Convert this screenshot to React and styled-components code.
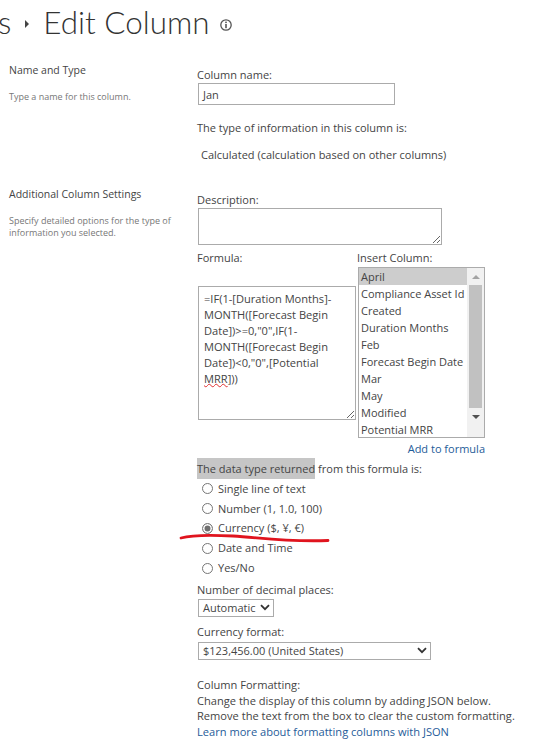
import React from 'react';
import styled, { createGlobalStyle } from 'styled-components';

const GlobalStyle = createGlobalStyle`
  html, body {
    margin: 0;
    padding: 0;
    background: #fff;
    overflow: hidden;
  }
  body {
    font: 400 12px/16px 'Open Sans', 'Noto Sans', sans-serif;
    color: #444;
  }
`;

const Page = styled.div`
  position: relative;
  width: 555px;
  height: 741px;
  overflow: hidden;
`;

const Header = styled.h1`
  display: flex;
  align-items: center;
  height: 44px;
  margin: 0 0 19px -2px;
  font: 300 31.4px/44px 'Lato', 'Open Sans', sans-serif;
  color: #333;
  white-space: nowrap;
`;

const Crumb = styled.span`
  box-sizing: border-box;
  width: 4px;
  height: 0;
  margin: 3px 14px 0 14px;
  border-left: 4px solid #444;
  border-top: 4px solid transparent;
  border-bottom: 4px solid transparent;
`;

const InfoIcon = styled.svg`
  width: 14px;
  height: 14px;
  margin: 5px 0 0 10px;
`;

const Section = styled.section`
  display: grid;
  grid-template-columns: 189px 1fr;
  padding-left: 9px;
  margin-bottom: ${p => p.$gap || 0}px;
`;

const SideTitle = styled.h3`
  margin: 0 0 14px;
  font: 400 10.5px/14px 'Open Sans', sans-serif;
  color: #444;
`;

const SideText = styled.p`
  margin: 0;
  width: 175px;
  font: 400 9px/12px 'Open Sans', sans-serif;
  color: #777;
`;

const Main = styled.div`
  min-width: 0;
`;

const Label = styled.div`
  font: 400 11px/16px 'Open Sans', sans-serif;
  color: #444;
  white-space: nowrap;
  margin-top: ${p => p.$top || 0}px;
  margin-left: ${p => p.$left || -1}px;
`;

const TextInput = styled.div`
  box-sizing: border-box;
  width: 197px;
  height: 22px;
  border: 1px solid #ababab;
  padding: 3px 4px;
  font: 400 11px/16px 'Open Sans', sans-serif;
  color: #444;
`;

const TextBox = styled.div`
  box-sizing: border-box;
  width: ${p => p.$w}px;
  height: ${p => p.$h}px;
  margin-top: ${p => p.$top || 0}px;
  border: 1px solid #ababab;
  padding: 4px 5px;
  font: 400 11.1px/16px 'Open Sans', sans-serif;
  color: #444;
  background: #fff;
  overflow: hidden;
  resize: both;
`;

const Squiggle = styled.span`
  text-decoration: underline wavy #e03030 1px;
  text-underline-offset: 0;
`;

const FormulaRow = styled.div`
  display: flex;
  gap: 2px;
  margin-top: 5px;
`;

const FormulaCol = styled.div`
  width: 158px;
`;

const ListCol = styled.div`
  width: 128px;
`;

const ListBox = styled.div`
  box-sizing: border-box;
  display: flex;
  width: 127px;
  height: 171px;
  margin-top: 1px;
  border: 1px solid #ababab;
  overflow: hidden;
`;

const Options = styled.div`
  width: 108px;
  flex: none;
  overflow: hidden;
`;

const Option = styled.div`
  height: 17px;
  padding-left: 2px;
  font: 400 11px/17px 'Open Sans', sans-serif;
  color: #444;
  white-space: nowrap;
  background: ${p => (p.$selected ? '#cdcdcd' : 'transparent')};
`;

const ScrollTrack = styled.div`
  flex: 1;
  display: flex;
  flex-direction: column;
  align-items: center;
  background: #f1f1f1;
`;

const ScrollBtn = styled.div`
  flex: none;
  height: 17px;
  display: flex;
  align-items: center;
  justify-content: center;
  &::after {
    content: '';
    border-left: 4px solid transparent;
    border-right: 4px solid transparent;
    ${p => (p.$down ? 'border-top: 4px solid #505050;' : 'border-bottom: 4px solid #a3a3a3;')}
  }
`;

const ScrollThumb = styled.div`
  width: 13px;
  height: 123px;
  background: #c1c1c1;
`;

const AddLink = styled.a`
  display: block;
  width: 127px;
  margin-top: 3px;
  text-align: right;
  font: 400 11px/16px 'Open Sans', sans-serif;
  color: #1f5c99;
  white-space: nowrap;
`;

const Highlight = styled.span`
  background: #c6c6c6;
  padding: 3px 0;
`;

const RadioGroup = styled.div`
  display: flex;
  flex-direction: column;
  margin-top: 2px;
  margin-left: 4px;
`;

const RadioRow = styled.label`
  display: flex;
  align-items: center;
  gap: 5px;
  height: 19.8px;
  font: 400 11px/16px 'Open Sans', sans-serif;
  color: #444;
  white-space: nowrap;
`;

const RadioDot = styled.span`
  box-sizing: border-box;
  flex: none;
  width: 11px;
  height: 11px;
  border: 1px solid #767676;
  border-radius: 50%;
  background: #fff;
  box-shadow: ${p => (p.$checked ? 'inset 0 0 0 1.5px #fff, inset 0 0 0 6px #6f6f6f' : 'none')};
`;

const SelectBox = styled.div`
  box-sizing: border-box;
  display: flex;
  align-items: center;
  justify-content: space-between;
  width: ${p => p.$w}px;
  height: 18px;
  margin-top: ${p => p.$top || 0}px;
  margin-bottom: ${p => p.$gap || 0}px;
  padding: 0 3px 0 4px;
  border: 1px solid #ababab;
  font: 400 11px/16px 'Open Sans', sans-serif;
  color: #444;
  white-space: nowrap;
`;

const Chevron = styled.svg`
  width: 10px;
  height: 7px;
  flex: none;
`;

const FormatHelp = styled.div`
  margin: 17px 0 0 -1px;
  font: 400 11.1px/15.7px 'Open Sans', sans-serif;
  color: #444;
  white-space: nowrap;
`;

const HelpLink = styled.a`
  color: #1f5c99;
`;

const RedMark = styled.svg`
  position: absolute;
  left: 178px;
  top: 530px;
  width: 155px;
  height: 16px;
  pointer-events: none;
`;

const columns = [
  'April',
  'Compliance Asset Id',
  'Created',
  'Duration Months',
  'Feb',
  'Forecast Begin Date',
  'Mar',
  'May',
  'Modified',
  'Potential MRR',
];

const dataTypes = [
  'Single line of text',
  'Number (1, 1.0, 100)',
  'Currency ($, ¥, €)',
  'Date and Time',
  'Yes/No',
];

const ChevronDown = () => (
  <Chevron viewBox="0 0 10 7">
    <path d="M1 1.2 5 5.2 9 1.2" fill="none" stroke="#333" strokeWidth="1.8" />
  </Chevron>
);

const App = () => (
  <Page>
    <GlobalStyle />
    <Header>
      s<Crumb />Edit Column
      <InfoIcon viewBox="0 0 14 14">
        <circle cx="7" cy="7" r="5.2" fill="none" stroke="#555" strokeWidth="1.3" />
        <rect x="6.2" y="6" width="1.6" height="4.2" fill="#555" />
        <rect x="6.2" y="3.6" width="1.6" height="1.5" fill="#555" />
      </InfoIcon>
    </Header>

    <Section $gap={24}>
      <div>
        <SideTitle>Name and Type</SideTitle>
        <SideText>Type a name for this column.</SideText>
      </div>
      <Main>
        <Label $top={4}>Column name:</Label>
        <TextInput>Jan</TextInput>
        <Label $top={15}>The type of information in this column is:</Label>
        <Label $top={11} $left={3}>Calculated (calculation based on other columns)</Label>
      </Main>
    </Section>

    <Section>
      <div>
        <SideTitle>Additional Column Settings</SideTitle>
        <SideText>Specify detailed options for the type of information you selected.</SideText>
      </div>
      <Main>
        <Label $top={5}>Description:</Label>
        <TextBox $w={244} $h={37} />
        <FormulaRow>
          <FormulaCol>
            <Label>Formula:</Label>
            <TextBox $w={158} $h={134} $top={20}>
              =IF(1-[Duration Months]-MONTH([Forecast Begin Date])&gt;=0,"0",IF(1-MONTH([Forecast Begin Date])&lt;0,"0",[Potential <Squiggle>MRR</Squiggle>]))
            </TextBox>
          </FormulaCol>
          <ListCol>
            <Label>Insert Column:</Label>
            <ListBox>
              <Options>
                {columns.map((name, i) => (
                  <Option key={name} $selected={i === 0}>{name}</Option>
                ))}
              </Options>
              <ScrollTrack>
                <ScrollBtn />
                <ScrollThumb />
                <ScrollBtn $down />
              </ScrollTrack>
            </ListBox>
            <AddLink>Add to formula</AddLink>
          </ListCol>
        </FormulaRow>
        <Label $top={4}>
          <Highlight>The data type returned</Highlight> from this formula is:
        </Label>
        <RadioGroup>
          {dataTypes.map((type, i) => (
            <RadioRow key={type}>
              <RadioDot $checked={i === 2} />
              {type}
            </RadioRow>
          ))}
        </RadioGroup>
        <Label $top={4}>Number of decimal places:</Label>
        <SelectBox $w={76} $top={1} $gap={7}>Automatic<ChevronDown /></SelectBox>
        <Label>Currency format:</Label>
        <SelectBox $w={233} $top={2}>$123,456.00 (United States)<ChevronDown /></SelectBox>
        <FormatHelp>
          Column Formatting:
          <br />
          Change the display of this column by adding JSON below.
          <br />
          Remove the text from the box to clear the custom formatting.
          <br />
          <HelpLink>Learn more about formatting columns with JSON</HelpLink>
        </FormatHelp>
      </Main>
    </Section>

    <RedMark viewBox="0 0 155 16">
      <path d="M3 8C12 5.5 28 4.500 55 6S105 12 150 10.500" fill="none" stroke="#e0141e" strokeWidth="2.800" strokeLinecap="round" />
    </RedMark>
  </Page>
);

export default App;
